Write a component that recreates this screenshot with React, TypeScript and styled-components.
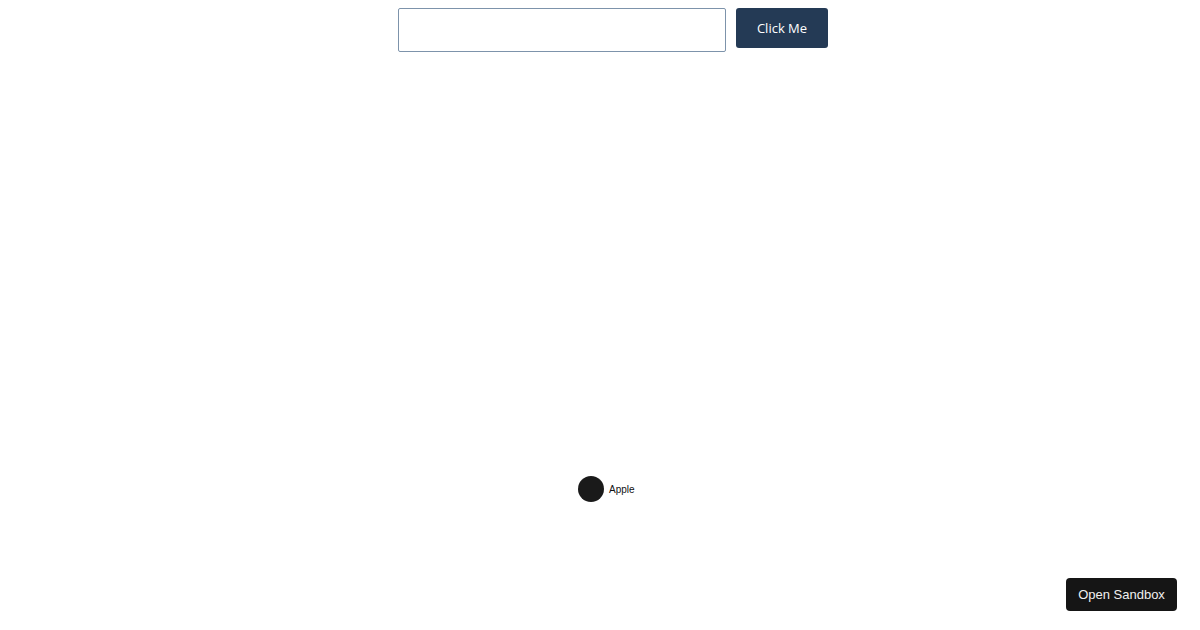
import styled, { createGlobalStyle } from "styled-components";

const GlobalStyle = createGlobalStyle`
  html, body {
    margin: 0;
    padding: 0;
    background: #fff;
  }
  body {
    font-family: "Liberation Sans", Arial, sans-serif;
  }
`;

export default function App() {
  return (
    <>
      <GlobalStyle />
      <Page>
        <SearchRow>
          <TextInput type="text" />
          <PrimaryButton>Click Me</PrimaryButton>
        </SearchRow>

        <Stage>
          <Item>
            <Dot />
            <ItemLabel>Apple</ItemLabel>
          </Item>
        </Stage>
      </Page>

      <SandboxButton>Open Sandbox</SandboxButton>
    </>
  );
}

const Page = styled.div`
  width: 1200px;
  height: 630px;
  box-sizing: border-box;
  padding-top: 8px;
  display: flex;
  flex-direction: column;
`;

const SearchRow = styled.div`
  display: flex;
  align-items: flex-start;
  gap: 10px;
  padding-left: 398px;
`;

const TextInput = styled.input`
  width: 328px;
  height: 44px;
  box-sizing: border-box;
  border: 1px solid #7d93ab;
  border-radius: 2px;
  padding: 0 10px;
  font-family: "Open Sans", sans-serif;
  font-size: 14px;
  outline: none;
`;

const PrimaryButton = styled.button`
  width: 92px;
  height: 40px;
  border: none;
  border-radius: 3px;
  background: #243a55;
  color: #fff;
  font-family: "Open Sans", sans-serif;
  font-size: 13px;
  cursor: pointer;
`;

const Stage = styled.div`
  display: flex;
  padding-left: 578px;
  padding-top: 424px;
`;

const Item = styled.div`
  display: flex;
  align-items: center;
  gap: 5px;
`;

const Dot = styled.div`
  width: 26px;
  height: 26px;
  border-radius: 50%;
  background: #1a1a1a;
`;

const ItemLabel = styled.span`
  font-family: "Liberation Sans", Arial, sans-serif;
  font-size: 10px;
  color: #111;
`;

const SandboxButton = styled.button`
  position: fixed;
  right: 23px;
  bottom: 19px;
  width: 111px;
  height: 33px;
  border: none;
  border-radius: 4px;
  background: #151515;
  color: #f0f0f0;
  font-family: "Liberation Sans", Arial, sans-serif;
  font-size: 13px;
  cursor: pointer;
`;
